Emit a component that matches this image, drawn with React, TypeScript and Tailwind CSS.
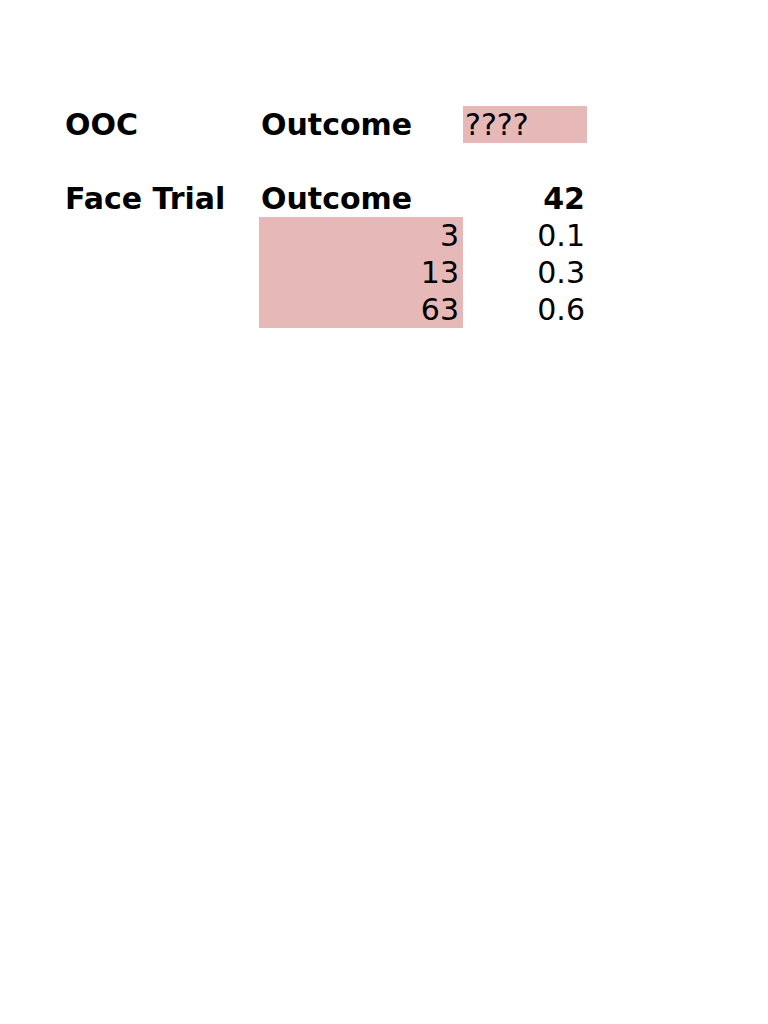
import React from 'react';

const cell = 'h-[37px] flex items-center leading-none';

const App: React.FC = () => {
  return (
    <div
      className="min-h-[1024px] w-full bg-white text-black text-[30px]"
      style={{ fontFamily: '"DejaVu Sans", sans-serif' }}
    >
      <div className="pt-[106px] pl-[64px] grid grid-cols-[195px_204px_124px]">
        {/* row 1 */}
        <div className={`${cell} font-bold pl-px`}>OOC</div>
        <div className={`${cell} font-bold pl-[2px]`}>Outcome</div>
        <div className={`${cell} bg-[#e6b8b7] pl-[2px]`}>????</div>

        {/* spacer row */}
        <div className={cell}></div>
        <div className={cell}></div>
        <div className={cell}></div>

        {/* row 3 */}
        <div className={`${cell} font-bold pl-px`}>Face Trial</div>
        <div className={`${cell} font-bold pl-[2px]`}>Outcome</div>
        <div className={`${cell} font-bold justify-end pr-[2px]`}>42</div>

        {[
          ['3', '0.1'],
          ['13', '0.3'],
          ['63', '0.6'],
        ].map(([a, b]) => (
          <React.Fragment key={a}>
            <div className={cell}></div>
            <div className={`${cell} bg-[#e6b8b7] justify-end pr-[4px]`}>{a}</div>
            <div className={`${cell} justify-end pr-[2px]`}>{b}</div>
          </React.Fragment>
        ))}
      </div>
    </div>
  );
};

export default App;
